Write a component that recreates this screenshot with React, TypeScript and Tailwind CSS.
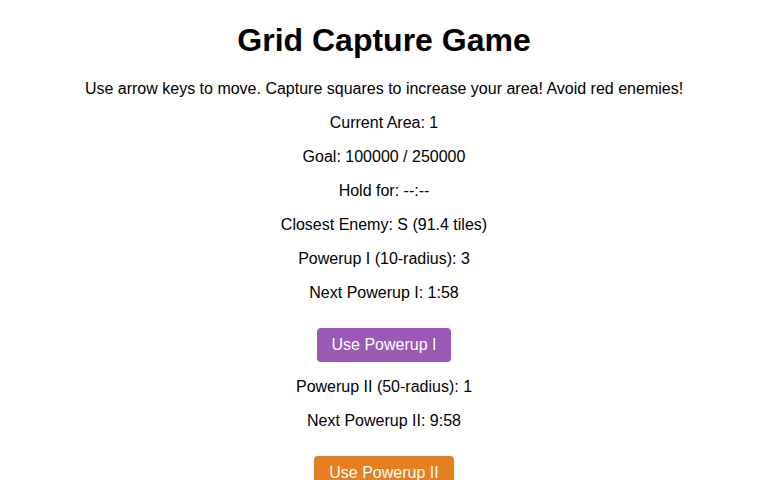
import React from "react";

const stats = [
  "Current Area: 1",
  "Goal: 100000 / 250000",
  "Hold for: --:--",
  "Closest Enemy: S (91.4 tiles)",
  "Powerup I (10-radius): 3",
  "Next Powerup I: 1:58",
];

export default function App() {
  return (
    <div className="min-h-screen bg-white text-black text-center font-['Liberation_Sans',Arial,sans-serif]">
      <h1 className="text-[32px] font-bold leading-[normal] pt-[22px] pb-[21px]">Grid Capture Game</h1>

      <div className="flex flex-col items-center gap-4 text-[16px] leading-[normal]">
        <p>Use arrow keys to move. Capture squares to increase your area! Avoid red enemies!</p>
        {stats.map((s) => (
          <p key={s}>{s}</p>
        ))}

        {/* powerup I trigger */}
        <button className="mt-[10px] h-[34px] px-[15px] rounded bg-[#9b59b6] text-white text-[16px] leading-[normal]">
          Use Powerup I
        </button>

        <p>Powerup II (50-radius): 1</p>
        <p>Next Powerup II: 9:58</p>

        <button className="mt-[10px] h-[34px] px-[15px] rounded bg-[#e67e22] text-white text-[16px] leading-[normal]">
          Use Powerup II
        </button>
      </div>
    </div>
  );
}
